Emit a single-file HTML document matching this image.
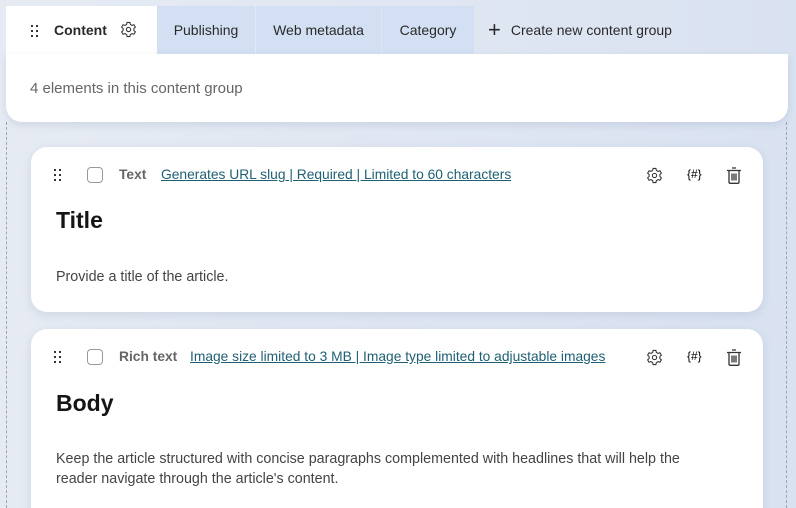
<!DOCTYPE html><html><head><style>
html,body{margin:0;width:796px;height:508px;overflow:hidden}
body{background:linear-gradient(90deg,#e6ebf3,#dfe6f2 60%,#d9e2f1);font-family:"Liberation Sans",sans-serif;position:relative}
.a{position:absolute}
.tab{position:absolute;top:6px;height:48px;background:#d3dff2;font-size:14px;color:#2a2a2a;display:flex;align-items:center;justify-content:center}
.dash{position:absolute;top:122px;bottom:0;border-left:1px dashed #9aa6b8}
.card{position:absolute;left:31px;width:732px;background:#fff;border-radius:16px;box-shadow:0 3px 10px rgba(80,100,140,.15)}
.hdr{position:absolute;top:20px;left:0;right:0;height:16px;font-size:13.8px}
.cb{position:absolute;left:56px;width:14px;height:14px;border:1px solid #999;border-radius:4px}
.lnk{color:#1f5f73;text-decoration:underline}
h2{position:absolute;left:25px;margin:0;font-size:23px;font-weight:bold;color:#151515}
.d{position:absolute;left:25px;font-size:14.3px;color:#444;line-height:20px}
</style></head><body>
<div class="dash" style="left:6px"></div><div class="dash" style="left:786px"></div>
<div class="tab" style="left:6px;width:151px;background:#fff;font-weight:bold;justify-content:flex-start">
<svg class="a" style="left:24px;top:18px" width="10" height="14"><g fill="#333"><rect x="1" y="1" width="2" height="2"/><rect x="6" y="1" width="2" height="2"/><rect x="1" y="6" width="2" height="2"/><rect x="6" y="6" width="2" height="2"/><rect x="1" y="11" width="2" height="2"/><rect x="6" y="11" width="2" height="2"/></g></svg>
<span class="a" style="left:48px">Content</span>
<svg class="a" style="left:114px;top:15px" width="17" height="17" viewBox="0 0 24 24" fill="none" stroke="#333" stroke-width="1.5"><circle cx="12" cy="12" r="3"/><path d="M10 2h4l.6 2.8 2.4 1.4 2.7-.9 2 3.4-2.1 1.9v2.8l2.1 1.9-2 3.4-2.7-.9-2.4 1.4L14 22h-4l-.6-2.8-2.4-1.4-2.7.9-2-3.4 2.1-1.9v-2.8L2.3 8.7l2-3.4 2.7.9 2.4-1.4z"/></svg></div>
<div class="tab" style="left:157px;width:98px">Publishing</div>
<div class="tab" style="left:256px;width:125px">Web metadata</div>
<div class="tab" style="left:382px;width:92px">Category</div>
<div class="tab" style="left:474px;width:220px;background:none;justify-content:flex-start"><span style="font-size:22px;margin:0 10px 0 14px;font-weight:300">+</span>Create new content group</div>
<div class="a" style="left:6px;top:54px;width:782px;height:68px;background:#fff;border-radius:0 0 16px 16px;box-shadow:0 3px 8px rgba(80,100,140,.15)"><span class="a" style="left:24px;top:26px;font-size:15px;color:#666">4 elements in this content group</span></div>

<div class="card" style="top:147px;height:165px">
<div class="hdr">
<svg class="a" style="left:22px;top:1px" width="10" height="14"><g fill="#333"><rect x="1" y="1" width="2" height="2"/><rect x="6" y="1" width="2" height="2"/><rect x="1" y="6" width="2" height="2"/><rect x="6" y="6" width="2" height="2"/><rect x="1" y="11" width="2" height="2"/><rect x="6" y="11" width="2" height="2"/></g></svg>
<div class="cb" style="top:0"></div>
<span class="a" style="left:88px;color:#666;font-weight:bold">Text</span>
<span class="a lnk" style="left:130px">Generates URL slug | Required | Limited to 60 characters</span>
<svg class="a" style="left:615px;top:0" width="17" height="17" viewBox="0 0 24 24" fill="none" stroke="#333" stroke-width="1.5"><circle cx="12" cy="12" r="3"/><path d="M10 2h4l.6 2.8 2.4 1.4 2.7-.9 2 3.4-2.1 1.9v2.8l2.1 1.9-2 3.4-2.7-.9-2.4 1.4L14 22h-4l-.6-2.8-2.4-1.4-2.7.9-2-3.4 2.1-1.9v-2.8L2.3 8.7l2-3.4 2.7.9 2.4-1.4z"/></svg>
<span class="a" style="left:656px;top:0;font-size:12px">{#}</span>
<svg class="a" style="left:695px;top:0" width="16" height="17" viewBox="0 0 16 17" fill="none" stroke="#333" stroke-width="1.3"><path d="M6 1h4M1 3.5h14M3 3.5v11.5c0 .8.5 1.3 1.3 1.3h7.4c.8 0 1.3-.5 1.3-1.3V3.5M6 6.5v7M8 6.5v7M10 6.5v7"/></svg>
</div>
<h2 style="top:60px">Title</h2>
<div class="d" style="top:120px">Provide a title of the article.</div></div>

<div class="card" style="top:329px;height:200px">
<div class="hdr">
<svg class="a" style="left:22px;top:1px" width="10" height="14"><g fill="#333"><rect x="1" y="1" width="2" height="2"/><rect x="6" y="1" width="2" height="2"/><rect x="1" y="6" width="2" height="2"/><rect x="6" y="6" width="2" height="2"/><rect x="1" y="11" width="2" height="2"/><rect x="6" y="11" width="2" height="2"/></g></svg>
<div class="cb" style="top:0"></div>
<span class="a" style="left:88px;color:#666;font-weight:bold">Rich text</span>
<span class="a lnk" style="left:159px">Image size limited to 3 MB | Image type limited to adjustable images</span>
<svg class="a" style="left:615px;top:0" width="17" height="17" viewBox="0 0 24 24" fill="none" stroke="#333" stroke-width="1.5"><circle cx="12" cy="12" r="3"/><path d="M10 2h4l.6 2.8 2.4 1.4 2.7-.9 2 3.4-2.1 1.9v2.8l2.1 1.9-2 3.4-2.7-.9-2.4 1.4L14 22h-4l-.6-2.8-2.4-1.4-2.7.9-2-3.4 2.1-1.9v-2.8L2.3 8.7l2-3.4 2.7.9 2.4-1.4z"/></svg>
<span class="a" style="left:656px;top:0;font-size:12px">{#}</span>
<svg class="a" style="left:695px;top:0" width="16" height="17" viewBox="0 0 16 17" fill="none" stroke="#333" stroke-width="1.3"><path d="M6 1h4M1 3.5h14M3 3.5v11.5c0 .8.5 1.3 1.3 1.3h7.4c.8 0 1.3-.5 1.3-1.3V3.5M6 6.5v7M8 6.5v7M10 6.5v7"/></svg>
</div>
<h2 style="top:61px">Body</h2>
<div class="d" style="top:120px;width:662px">Keep the article structured with concise paragraphs complemented with headlines that will help the reader navigate through the article's content.</div></div>
</body></html>
